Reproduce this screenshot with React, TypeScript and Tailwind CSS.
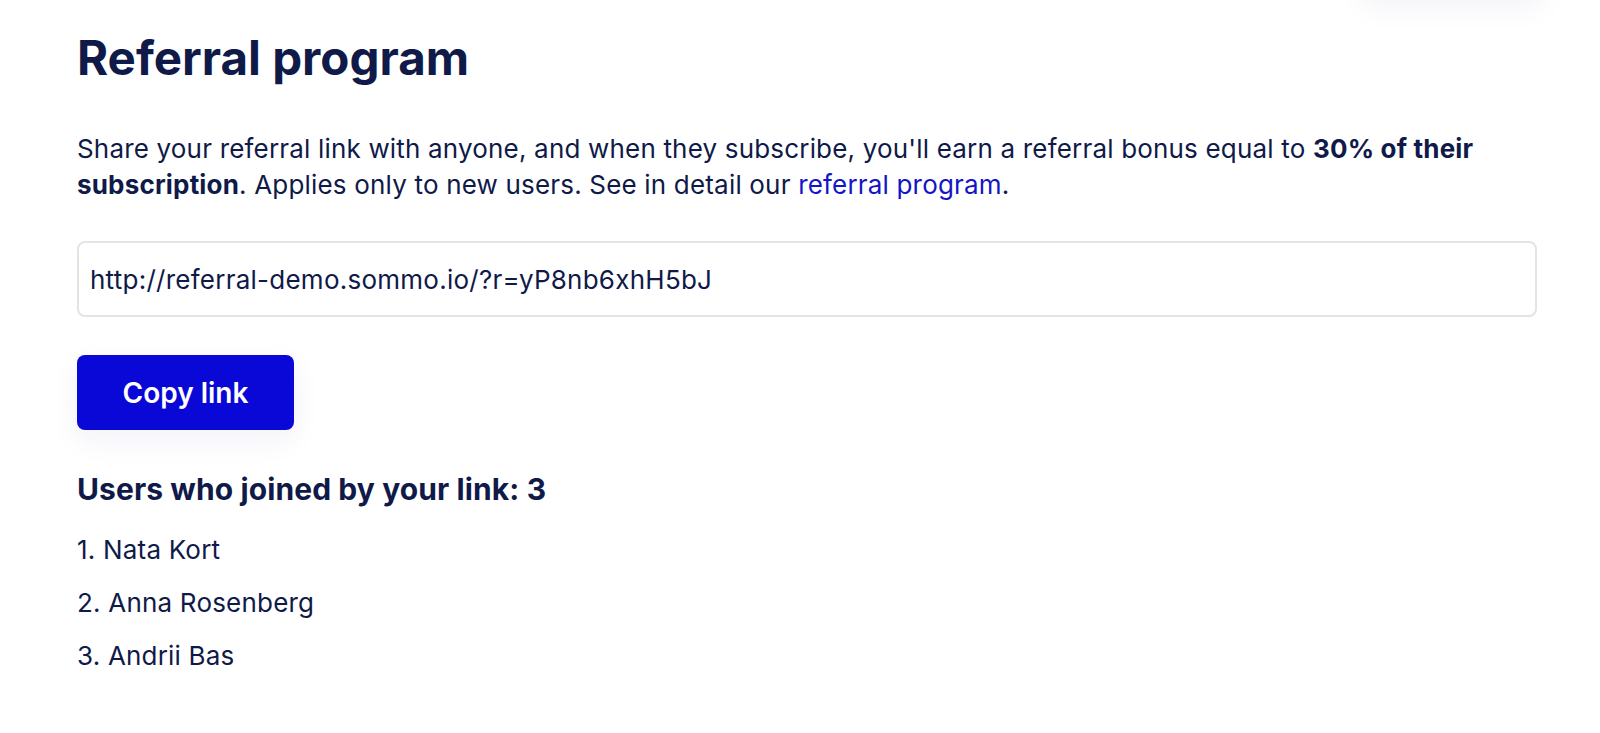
const users = ['Nata Kort', 'Anna Rosenberg', 'Andrii Bas'];

const App = () => {
  return (
    <div
      className="relative min-h-[733px] bg-white text-[#0f1a48] overflow-hidden"
      style={{ fontFamily: 'Inter, "Noto Sans", sans-serif' }}
    >
      {/* shadow of a control sitting above the fold */}
      <div className="absolute right-[55px] top-[-74px] w-[185px] h-[74px] rounded-xl bg-white shadow-[0_10px_28px_rgba(20,30,120,0.045)]" />

      <div className="pl-[77px] pr-[63px] pt-[29px]">
        <h1 className="text-[47.5px] leading-[58px] font-bold">Referral program</h1>

        <p className="mt-[44px] text-[26px] leading-[36px] tracking-[0.18px]">
          Share your referral link with anyone, and when they subscribe, you'll earn a referral bonus equal to{' '}
          <b className="font-bold">30% of their subscription</b>. Applies only to new users. See in detail our{' '}
          <a className="text-[#1414c8]">referral program</a>.
        </p>

        <div className="mt-[38px] h-[76px] flex items-center rounded-lg border-2 border-[#e3e4e8] px-[11px] text-[26px] tracking-[0.25px]">
          http://referral-demo.sommo.io/?r=yP8nb6xhH5bJ
        </div>

        <button className="mt-[38px] w-[217px] h-[75px] rounded-lg bg-[#0a08d6] text-white text-[28px] font-semibold shadow-[0_10px_30px_rgba(30,30,150,0.06)]">
          Copy link
        </button>

        <h2 className="mt-[41px] text-[30px] leading-[36px] font-bold tracking-[0.1px]">
          Users who joined by your link: {users.length}
        </h2>

        <ol className="mt-[25px] flex flex-col gap-[17px] text-[26px] leading-[36px] tracking-[0.2px]">
          {users.map((u, i) => (
            <li key={u}>
              {i + 1}. {u}
            </li>
          ))}
        </ol>
      </div>
    </div>
  );
};

export default App;
